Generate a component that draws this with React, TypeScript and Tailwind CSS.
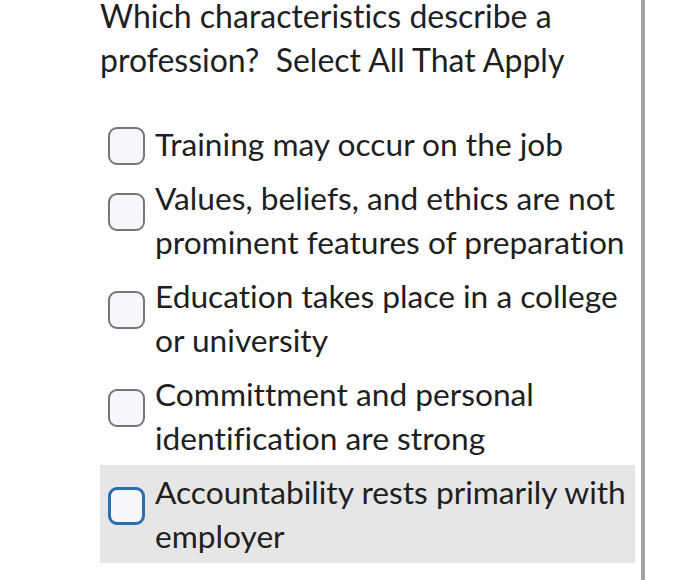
import React from "react";

const options: { lines: string[]; active?: boolean }[] = [
  { lines: ["Training may occur on the job"] },
  { lines: ["Values, beliefs, and ethics are not", "prominent features of preparation"] },
  { lines: ["Education takes place in a college", "or university"] },
  { lines: ["Committment and personal", "identification are strong"] },
  { lines: ["Accountability rests primarily with", "employer"], active: true },
];

export default function App() {
  return (
    <div
      className="w-[700px] h-[580px] bg-white flex overflow-hidden text-[#1f1f1f] [font-variant-ligatures:none] [font-feature-settings:'liga'_0,'clig'_0,'calt'_0,'dlig'_0]"
      style={{ fontFamily: "Lato, 'Open Sans', sans-serif" }}
    >
      <div className="w-[641px] pl-[100px] pr-[6px] flex flex-col">
        <div className="mt-[-6px] text-[32px] leading-[44px] whitespace-nowrap">
          Which characteristics describe a
          <br />
          profession?{"\u00a0"} Select All That Apply
        </div>
        <div className="mt-[35px] flex flex-col">
          {options.map((o, i) => (
            <div
              key={i}
              className={`flex items-start gap-[10px] py-[5px] pl-[8px] ${o.active ? "bg-[#e6e6e6]" : ""}`}
            >
              <div
                className={`shrink-0 w-[37px] h-[38px] rounded-[9px] bg-[#f6f7fb] ${
                  i === 0 ? "mt-[5px]" : "mt-[17px]"
                } ${o.active ? "border-[3px] border-[#2a6eb0]" : "border-2 border-[#767676]"}`}
              />
              <div className="text-[31.7px] leading-[44px] whitespace-nowrap">
                {o.lines.map((l, j) => (
                  <div key={j}>{l}</div>
                ))}
              </div>
            </div>
          ))}
        </div>
      </div>
      <div className="w-[4px] h-full bg-[#a4a4a4]" />
    </div>
  );
}
